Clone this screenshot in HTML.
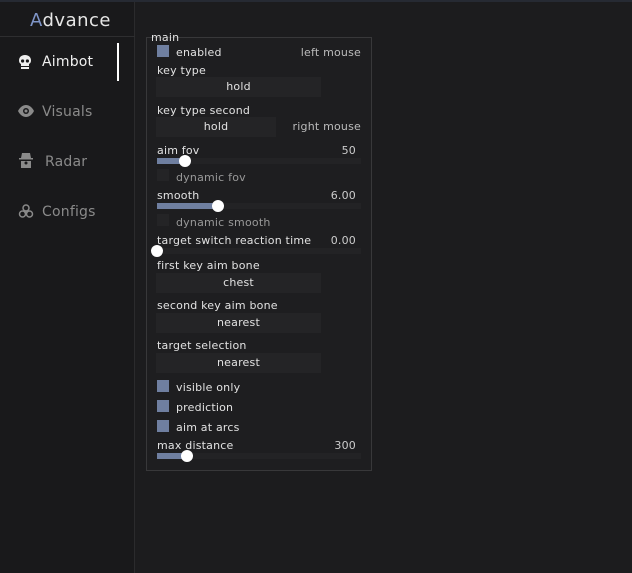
<!DOCTYPE html>
<html><head><style>
*{margin:0;padding:0;box-sizing:border-box}
body{width:632px;height:573px;background:#1c1c1e;font-family:"DejaVu Sans","Liberation Sans",sans-serif;color:#e2e2e2;position:relative;overflow:hidden;font-size:11px;letter-spacing:0.2px}
.a{position:absolute;white-space:nowrap;line-height:1}
.side{position:absolute;left:0;top:0;width:135px;height:573px;background:#19191b;border-right:1px solid #2b2b2d}
.top{position:absolute;left:0;top:0;width:632px;height:2px;background:#262a33}
.hdr{position:absolute;left:0;top:36px;width:135px;height:1px;background:#2e2e30}
.nav{position:absolute;left:42px;font-size:14px;color:#8a8a8a}
.panel{position:absolute;left:146px;top:37px;width:226px;height:434px;background:#1e1e20;border:1px solid #38383a}
.cb{position:absolute;left:157px;width:12px;height:12px;background:#6f7fa0}
.cbd{background:#242426}
.combo{position:absolute;left:156px;height:20px;background:#242426;text-align:center;line-height:20px}
.tr{position:absolute;left:157px;width:204px;height:6px;background:#232325}
.fill{position:absolute;left:0;top:0;height:6px;background:#6f7fa0}
.kn{position:absolute;width:12px;height:12px;border-radius:50%;background:#fff;top:-3px}
</style></head><body>
<div class="side"></div>
<div class="top"></div>
<div class="hdr"></div>
<div class="a" style="left:30px;top:12px;font-size:18px;color:#e6e6e6;letter-spacing:0.5px"><span style="color:#7f95c8">A</span>dvance</div>
<div style="position:absolute;left:117px;top:43px;width:2px;height:38px;background:#fff"></div>
<svg style="position:absolute;left:18px;top:55px" width="14" height="14" viewBox="0 0 14 14"><path d="M7 0C3 0 1 2.5 1 5.5c0 2 1 3 2 3.5v2h8v-2c1-.5 2-1.5 2-3.5C13 2.5 11 0 7 0z M3 12h8v2H3z" fill="#eee"/><circle cx="4.6" cy="6" r="1.6" fill="#19191b"/><circle cx="9.4" cy="6" r="1.6" fill="#19191b"/></svg>
<div class="nav a" style="top:55px;color:#f0f0f0">Aimbot</div>
<svg style="position:absolute;left:18px;top:105px" width="16" height="12" viewBox="0 0 16 12"><path d="M0 6C2 2 5 0 8 0s6 2 8 6c-2 4-5 6-8 6S2 10 0 6z" fill="#8a8a8a"/><circle cx="8" cy="6" r="3" fill="#19191b"/><circle cx="8" cy="6" r="1.5" fill="#8a8a8a"/></svg>
<div class="nav a" style="top:105px">Visuals</div>
<svg style="position:absolute;left:18px;top:153px" width="16" height="15" viewBox="0 0 16 15"><path d="M4 0h8l1 5H3z M1 5h14v1.5H1z M3 8h10v7H3z" fill="#8a8a8a"/><circle cx="8" cy="10" r="1.5" fill="#19191b"/></svg>
<div class="nav a" style="top:155px;left:45px">Radar</div>
<svg style="position:absolute;left:18px;top:203px" width="16" height="16" viewBox="0 0 16 16"><g fill="none" stroke="#8a8a8a" stroke-width="1.5"><circle cx="8" cy="5" r="3"/><circle cx="4.5" cy="11" r="3"/><circle cx="11.5" cy="11" r="3"/><circle cx="8" cy="9" r="1"/></g></svg>
<div class="nav a" style="top:205px">Configs</div>

<div class="panel"></div>
<div class="a" style="left:151px;top:32px">main</div>
<div class="cb" style="top:45px"></div><div class="a" style="left:176px;top:47px">enabled</div>
<div class="a" style="right:271px;top:47px;color:#bbb">left mouse</div>
<div class="a" style="left:157px;top:65px">key type</div>
<div class="combo" style="top:77px;width:165px">hold</div>
<div class="a" style="left:157px;top:105px">key type second</div>
<div class="combo" style="top:117px;width:120px">hold</div>
<div class="a" style="right:271px;top:121px;color:#bbb">right mouse</div>

<div class="a" style="left:157px;top:145px">aim fov</div><div class="a" style="right:276px;top:145px;color:#ccc">50</div>
<div class="tr" style="top:158px"><div class="fill" style="width:28px"></div><div class="kn" style="left:22px"></div></div>
<div class="cb cbd" style="top:169px"></div><div class="a" style="left:176px;top:172px;color:#999">dynamic fov</div>
<div class="a" style="left:157px;top:190px">smooth</div><div class="a" style="right:276px;top:190px;color:#ccc">6.00</div>
<div class="tr" style="top:203px"><div class="fill" style="width:61px"></div><div class="kn" style="left:55px"></div></div>
<div class="cb cbd" style="top:214px"></div><div class="a" style="left:176px;top:217px;color:#999">dynamic smooth</div>
<div class="a" style="left:157px;top:235px">target switch reaction time</div><div class="a" style="right:276px;top:235px;color:#ccc">0.00</div>
<div class="tr" style="top:248px"><div class="kn" style="left:-6px"></div></div>

<div class="a" style="left:157px;top:260px">first key aim bone</div>
<div class="combo" style="top:273px;width:165px">chest</div>
<div class="a" style="left:157px;top:300px">second key aim bone</div>
<div class="combo" style="top:313px;width:165px">nearest</div>
<div class="a" style="left:157px;top:340px">target selection</div>
<div class="combo" style="top:353px;width:165px">nearest</div>
<div class="cb" style="top:380px"></div><div class="a" style="left:176px;top:382px">visible only</div>
<div class="cb" style="top:400px"></div><div class="a" style="left:176px;top:402px">prediction</div>
<div class="cb" style="top:420px"></div><div class="a" style="left:176px;top:422px">aim at arcs</div>
<div class="a" style="left:157px;top:440px">max distance</div><div class="a" style="right:276px;top:440px;color:#ccc">300</div>
<div class="tr" style="top:453px"><div class="fill" style="width:30px"></div><div class="kn" style="left:24px"></div></div>
</body></html>
